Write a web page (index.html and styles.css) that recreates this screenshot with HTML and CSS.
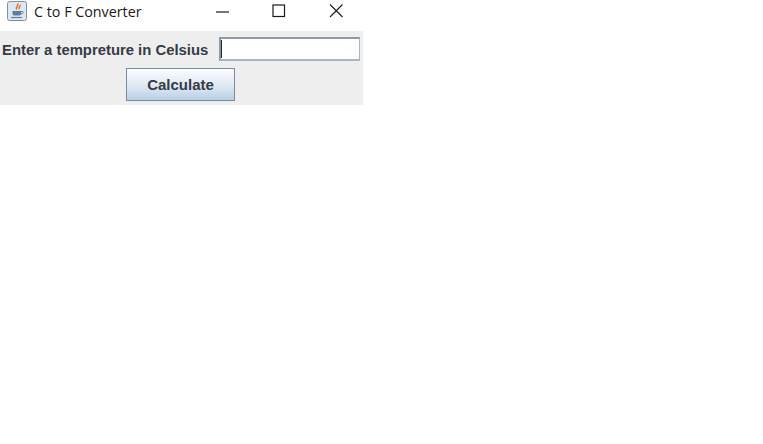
FILE: index.html
```html
<!DOCTYPE html>
<html lang="en">
<head>
    <meta charset="UTF-8">
    <title>C to F Converter</title>
    <link rel="stylesheet" href="styles.css">
</head>
<body>
    <div class="window">
        <div class="titlebar">
            <svg class="app-icon" width="20" height="20" viewBox="0 0 20 20">
                <rect x="0.5" y="0.5" width="19" height="19" rx="2" fill="#dfe7ef" stroke="#7f8fa0"/>
                <path d="M10.500 2.500c2 2-2.500 3.500-.8 6M13 4c1 1.200-1.800 2.200-.6 4" fill="none" stroke="#e0702a" stroke-width="1.500"/>
                <path d="M5.500 10h8.500v2.500c0 1.500-1 2-2 2H7.500c-1 0-2-.5-2-2z" fill="#5b7f9e"/>
                <path d="M14 10.500h1.500c1.200 0 1 2.500-1.500 2.500" fill="none" stroke="#5b7f9e"/>
                <path d="M4 16.500h11" stroke="#5b7f9e" stroke-width="1.200"/>
            </svg>
            <span class="title">C to F Converter</span>
            <div class="window-buttons">
                <svg class="win-btn" width="14" height="14" viewBox="0 0 14 14">
                    <path d="M1 8h13" stroke="#1a1a1a" stroke-width="1.200"/>
                </svg>
                <svg class="win-btn" width="14" height="14" viewBox="0 0 14 14">
                    <rect x="1" y="1" width="11.500" height="11.500" fill="none" stroke="#1a1a1a" stroke-width="1.200"/>
                </svg>
                <svg class="win-btn" width="14" height="14" viewBox="0 0 14 14">
                    <path d="M1 .5l12.500 12.500M13.500 .5L1 13" stroke="#1a1a1a" stroke-width="1.100"/>
                </svg>
            </div>
        </div>
        <div class="content">
            <div class="row">
                <label class="field-label" for="celsius">Enter a tempreture in Celsius</label>
                <div class="text-input" id="celsius"><span class="caret"></span></div>
            </div>
            <button class="calc-btn">Calculate</button>
        </div>
    </div>
</body>
</html>
```

FILE: styles.css
```css
* {
    margin: 0;
    padding: 0;
    box-sizing: border-box;
}

body {
    background-color: #ffffff;
    font-family: "Liberation Sans", Arial, sans-serif;
}

.window {
    width: 363px;
}

.titlebar {
    height: 31px;
    display: flex;
    align-items: center;
    padding-left: 7px;
    padding-bottom: 9px;
    background-color: #ffffff;
}

.app-icon {
    margin-right: 7px;
}

.title {
    font-family: "Open Sans", sans-serif;
    font-size: 14.300px;
    color: #1a1a1a;
}

.window-buttons {
    margin-left: auto;
    display: flex;
    gap: 43px;
    padding-right: 20px;
}

.content {
    height: 74px;
    background-color: #eeeeee;
    display: flex;
    flex-direction: column;
}

.row {
    display: flex;
    align-items: center;
    padding: 6px 3px 0 2px;
}

.field-label {
    padding-top: 2px;
    font-size: 14.850px;
    font-weight: bold;
    color: #333b47;
}

.text-input {
    margin-left: auto;
    width: 141px;
    height: 24px;
    background-color: #ffffff;
    border: 2px solid #8c9aa8;
    border-right-width: 1px;
    border-bottom-color: #a8b4c0;
    border-right-color: #a8b4c0;
    padding: 1px 0;
}

.caret {
    display: block;
    width: 1px;
    height: 100%;
    background-color: #222222;
}

.calc-btn {
    margin: 7px 0 0 126px;
    width: 109px;
    height: 33px;
    border: 1px solid #7a8a9f;
    background: linear-gradient(#fbfcfe, #dfe8f3 55%, #b8cfe6);
    font-family: "Liberation Sans", Arial, sans-serif;
    font-size: 15px;
    font-weight: bold;
    color: #333b47;
}
```
